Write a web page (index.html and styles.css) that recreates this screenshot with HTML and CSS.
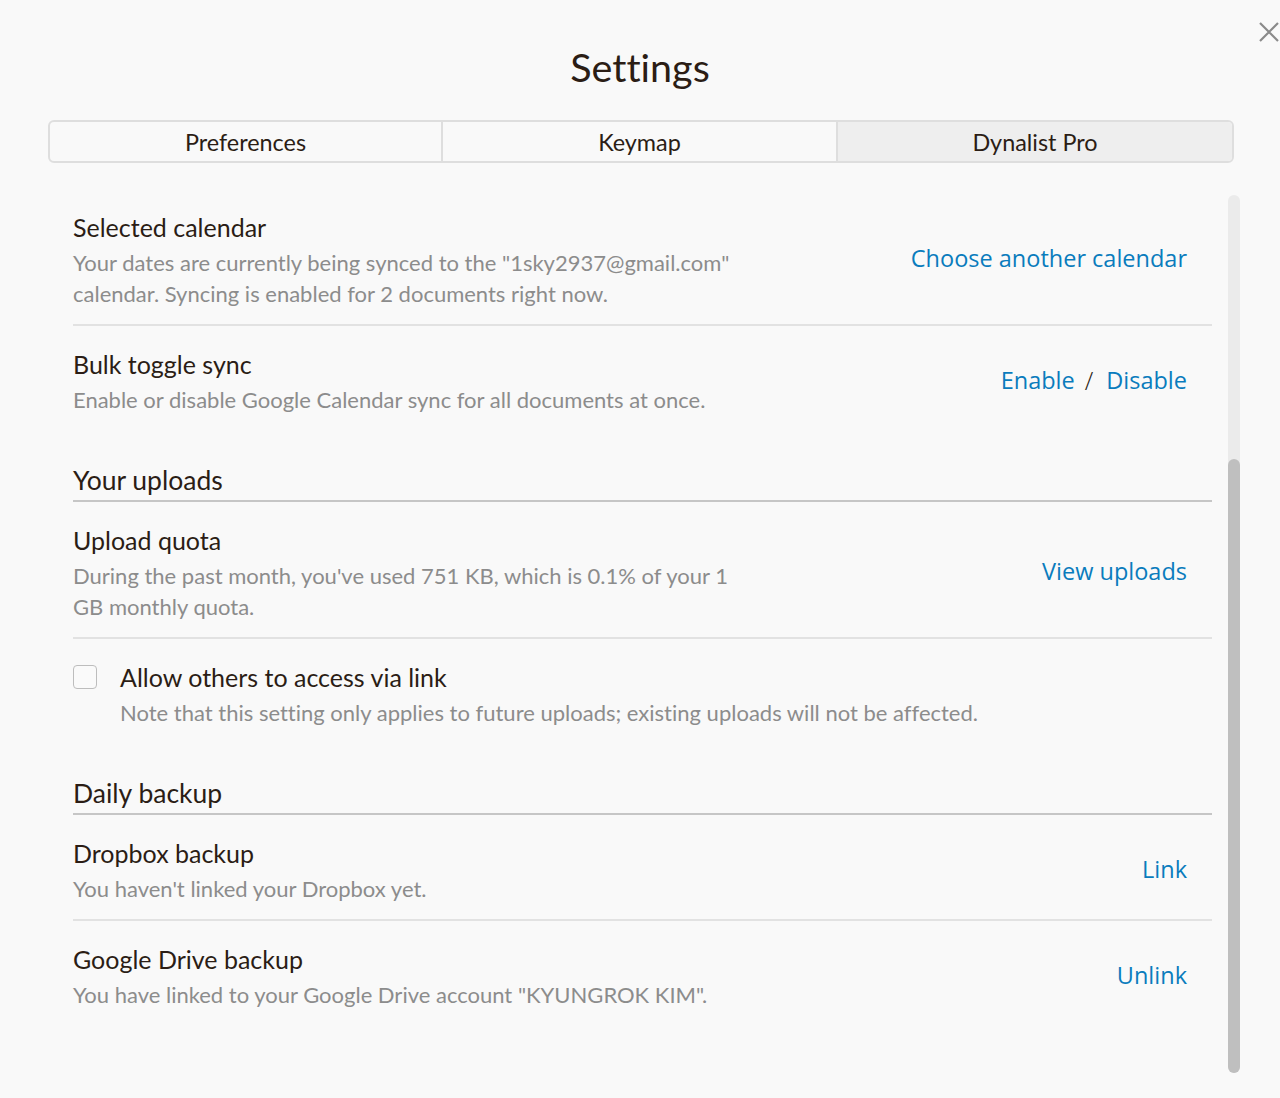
FILE: index.html
```html
<!DOCTYPE html>
<html lang="en">
<head>
<meta charset="utf-8">
<title>Settings</title>
<link rel="stylesheet" href="styles.css">
</head>
<body>
<div class="dialog">
  <button class="close" aria-label="Close">
    <svg width="20" height="20" viewBox="0 0 20 20"><path d="M1 1 L19 19 M19 1 L1 19" stroke="#8a8a8a" stroke-width="2.2" fill="none"/></svg>
  </button>
  <h1 class="title">Settings</h1>
  <div class="tabs">
    <div class="tab">Preferences</div>
    <div class="tab">Keymap</div>
    <div class="tab active">Dynalist Pro</div>
  </div>
  <div class="body">
    <div class="panel">
      <div class="row">
        <div class="text">
          <div class="name">Selected calendar</div>
          <div class="desc">Your dates are currently being synced to the "1sky2937@gmail.com" calendar. Syncing is enabled for 2 documents right now.</div>
        </div>
        <div class="actions"><a class="link">Choose another calendar</a></div>
      </div>
      <div class="row last">
        <div class="text">
          <div class="name">Bulk toggle sync</div>
          <div class="desc">Enable or disable Google Calendar sync for all documents at once.</div>
        </div>
        <div class="actions"><a class="link">Enable</a><span class="slash">/</span><a class="link">Disable</a></div>
      </div>

      <h2 class="section">Your uploads</h2>
      <div class="row">
        <div class="text">
          <div class="name">Upload quota</div>
          <div class="desc">During the past month, you've used 751 KB, which is 0.1% of your 1 GB monthly quota.</div>
        </div>
        <div class="actions"><a class="link">View uploads</a></div>
      </div>
      <div class="row last check-row">
        <span class="checkbox"></span>
        <div class="text wide">
          <div class="name">Allow others to access via link</div>
          <div class="desc">Note that this setting only applies to future uploads; existing uploads will not be affected.</div>
        </div>
      </div>

      <h2 class="section">Daily backup</h2>
      <div class="row">
        <div class="text">
          <div class="name">Dropbox backup</div>
          <div class="desc">You haven't linked your Dropbox yet.</div>
        </div>
        <div class="actions"><a class="link">Link</a></div>
      </div>
      <div class="row last">
        <div class="text wide">
          <div class="name">Google Drive backup</div>
          <div class="desc">You have linked to your Google Drive account "KYUNGROK KIM".</div>
        </div>
        <div class="actions"><a class="link">Unlink</a></div>
      </div>
    </div>
    <div class="scrollbar"><div class="thumb"></div></div>
  </div>
</div>
</body>
</html>
```

FILE: styles.css
```css
* { box-sizing: border-box; }
html, body { margin: 0; padding: 0; }
body {
  background: #f9f9f9;
  font-family: Lato, "Open Sans", sans-serif;
  font-weight: 400;
  font-variant-ligatures: none;
  color: #2b1d15;
  width: 1280px;
  height: 1098px;
  overflow: hidden;
}
.dialog { position: relative; padding-top: 44px; }
.close {
  position: absolute;
  top: 22px;
  right: 0;
  width: 21px;
  height: 20px;
  padding: 0;
  border: 0;
  background: none;
  overflow: hidden;
}
.close svg { display: block; }
.title {
  margin: 0;
  text-align: center;
  font-size: 39.5px;
  font-weight: 400;
  line-height: 46px;
  color: #2b1d15;
}
.tabs {
  margin: 30px 46px 0 48px;
  display: grid;
  grid-template-columns: 391px 395px 1fr;
  border: 2px solid #dedede;
  border-radius: 6px;
  overflow: hidden;
  height: 43px;
}
.tab {
  display: flex;
  align-items: center;
  justify-content: center;
  font-size: 23.4px;
  border-left: 2px solid #dedede;
}
.tab:first-child { border-left: 0; }
.tab.active { background: #eeeeee; }
.body {
  display: flex;
  margin-top: 32px;
  height: 878px;
}
.panel {
  margin-left: 73px;
  width: 1139px;
  margin-top: -6px;
}
.row {
  display: flex;
  align-items: center;
  justify-content: space-between;
  padding: 22px 25px 15px 0;
  border-bottom: 2px solid #e2e2e2;
}
.row.last { border-bottom: 0; }
.text { width: 680px; }
.text.wide { width: auto; }
.name {
  font-size: 25px;
  line-height: 32px;
}
.desc {
  margin-top: 4px;
  font-size: 22px;
  line-height: 31px;
  color: #8c8c8c;
}
.actions {
  display: flex;
  align-items: center;
  font-family: "Open Sans", "Noto Sans", sans-serif;
  font-weight: 400;
  font-size: 23.5px;
  margin-top: -4px;
}
.link { color: #0a7cbd; cursor: pointer; }
.slash { color: #2b1d15; margin: 0 13px 0 10px; font-weight: 300; font-size: 25px; }
.section {
  margin: 34px 0 0;
  padding-bottom: 4px;
  font-size: 26.5px;
  font-weight: 400;
  line-height: 32px;
  border-bottom: 2px solid #c6c6c6;
}
.check-row { justify-content: flex-start; align-items: flex-start; }
.checkbox {
  flex: none;
  width: 24px;
  height: 24px;
  margin: 4px 23px 0 0;
  border: 1.5px solid #bdbdbd;
  border-radius: 4px;
  background: #fafafa;
}
.scrollbar {
  margin-left: 16px;
  width: 12px;
  height: 878px;
  border-radius: 6px;
  background: #ebebeb;
  display: flex;
  flex-direction: column;
  justify-content: flex-end;
}
.thumb {
  height: 614px;
  border-radius: 6px;
  background: #bfbfbf;
}
```
